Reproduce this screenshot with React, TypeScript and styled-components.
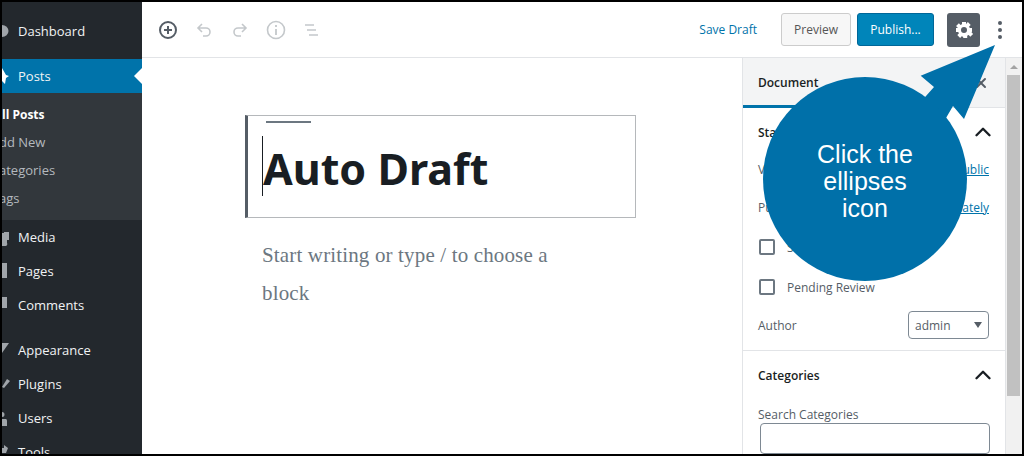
import React from "react";
import styled, { createGlobalStyle } from "styled-components";
import { ChevronUp, X } from "lucide-react";

const GlobalStyle = createGlobalStyle`
	html, body { margin: 0; padding: 0; background: #000; }
	body { font-family: "Open Sans", "Noto Sans", sans-serif; overflow: hidden; }
	* { box-sizing: border-box; }
`;

const Frame = styled.div`
	position: relative;
	width: 1024px;
	height: 456px;
	border: 2px solid #000;
	display: flex;
	overflow: hidden;
	background: #fff;
`;

const Sidebar = styled.nav`
	width: 140px;
	flex: none;
	background: #23282d;
	padding-top: 12px;
	color: #eee;
`;

const MenuItem = styled.div<{ $active?: boolean; $gap?: number }>`
	position: relative;
	height: 34px;
	margin-top: ${({ $gap }) => $gap || 0}px;
	padding-left: 16px;
	display: flex;
	align-items: center;
	font-size: 13px;
	color: #f1f3f4;
	background: ${({ $active }) => ($active ? "#0073aa" : "transparent")};
`;

const MenuIconSvg = styled.svg<{ $light?: boolean }>`
	position: absolute;
	left: 0;
	top: 8px;
	width: 8px;
	height: 18px;
	fill: ${({ $light }) => ($light ? "#fff" : "#a0a5aa")};
`;

const ActiveNotch = styled.span`
	position: absolute;
	right: 0;
	top: 9px;
	border: 8px solid transparent;
	border-left-width: 0;
	border-right-color: #fff;
`;

const SubMenu = styled.div`
	background: #32373c;
	height: 127px;
	padding: 7px 0 0;
`;

const SubItem = styled.div<{ $current?: boolean }>`
	height: 28px;
	margin-left: ${({ $current }) => ($current ? 0 : -3)}px;
	display: flex;
	align-items: center;
	font-size: ${({ $current }) => ($current ? 12 : 13)}px;
	font-weight: ${({ $current }) => ($current ? 700 : 400)};
	color: ${({ $current }) => ($current ? "#fff" : "#b4b9be")};
`;

const Main = styled.div`
	flex: 1;
	min-width: 0;
	display: flex;
	flex-direction: column;
`;

const TopBar = styled.header`
	height: 56px;
	flex: none;
	border-bottom: 1px solid #e2e4e7;
	display: flex;
	align-items: center;
	padding: 0 18px 0 14px;
`;

const ToolIcon = styled.svg`
	width: 24px;
	height: 24px;
	margin-right: 12px;
	fill: none;
	flex: none;
`;

const Spacer = styled.div`
	flex: 1;
`;

const SaveDraft = styled.span`
	font-size: 12px;
	color: #0073aa;
	margin-right: 24px;
`;

const PreviewButton = styled.button`
	width: 70px;
	height: 33px;
	border: 1px solid #ccc;
	border-radius: 3px;
	background: #f7f7f7;
	color: #555;
	font: 12px "Open Sans", sans-serif;
	padding: 0;
	margin-right: 6px;
`;

const PublishButton = styled.button`
	width: 77px;
	height: 33px;
	border: 1px solid #006799;
	border-radius: 3px;
	background: #0085ba;
	color: #fff;
	font: 12px "Open Sans", sans-serif;
	padding: 0;
	margin-right: 13px;
`;

const GearButton = styled.div`
	width: 33px;
	height: 34px;
	border-radius: 3px;
	background: #555d66;
	display: flex;
	align-items: center;
	justify-content: center;
	margin-right: 16px;
`;

const Dots = styled.svg`
	width: 8px;
	height: 20px;
	fill: #555d66;
`;

const Body = styled.div`
	flex: 1;
	min-height: 0;
	display: flex;
`;

const Editor = styled.main`
	flex: 1;
	padding: 57px 0 0 103px;
`;

const TitleBlock = styled.div`
	position: relative;
	width: 391px;
	height: 103px;
	border: 1px solid #b5b8bb;
	border-left: 3px solid #555d66;
	padding: 24px 0 0 15px;
`;

const BlockMark = styled.span`
	position: absolute;
	left: 18px;
	top: 5px;
	width: 45px;
	height: 2px;
	background: #6c7781;
`;

const Caret = styled.span`
	position: absolute;
	left: 14px;
	top: 20px;
	width: 1px;
	height: 60px;
	background: #191e23;
`;

const Title = styled.h1`
	margin: 0;
	font: 700 43px/58px "Noto Sans", "Open Sans", sans-serif;
	color: #191e23;
`;

const Paragraph = styled.p`
	margin: 18px 0 0 17px;
	width: 300px;
	font: 21px/38px "Liberation Serif", serif;
	letter-spacing: 0.15px;
	color: #6c7781;
`;

const Panel = styled.aside`
	width: 280px;
	flex: none;
	border-left: 1px solid #e2e4e7;
	display: flex;
`;

const PanelContent = styled.div`
	flex: 1;
	min-width: 0;
	border-right: 1px solid #e2e4e7;
`;

const TabBar = styled.div`
	height: 50px;
	background: #f3f4f5;
	border-bottom: 1px solid #e2e4e7;
	display: flex;
	align-items: center;
	justify-content: space-between;
	padding: 0 16px 0 15px;
	position: relative;
`;

const TabLabel = styled.span`
	font-size: 12px;
	font-weight: 600;
	color: #191e23;
`;

const TabUnderline = styled.span`
	position: absolute;
	left: 0;
	bottom: -1px;
	width: 91px;
	height: 3px;
	background: #0073aa;
`;

const Section = styled.section<{ $height: number }>`
	height: ${({ $height }) => $height}px;
	border-bottom: 1px solid #e2e4e7;
	padding: 0 16px 0 15px;
`;

const SectionHead = styled.div`
	height: 36px;
	margin: 6px -7px 0 0;
	display: flex;
	align-items: center;
	justify-content: space-between;
	font-size: 12px;
	font-weight: 600;
	color: #191e23;
`;

const Row = styled.div<{ $height?: number }>`
	height: ${({ $height }) => $height || 38}px;
	display: flex;
	align-items: center;
	justify-content: space-between;
	font-size: 12px;
	color: #555d66;
`;

const Link = styled.span`
	color: #0073aa;
	text-decoration: underline;
`;

const CheckRow = styled.div`
	height: 40px;
	display: flex;
	align-items: center;
	gap: 12px;
	font-size: 12px;
	color: #555d66;
`;

const CheckGroup = styled.div`
	padding-top: 1px;
`;

const CheckBox = styled.span`
	width: 16px;
	height: 16px;
	margin-left: 1px;
	border: 2px solid #6c7781;
	border-radius: 2px;
	flex: none;
`;

const SelectBox = styled.div`
	width: 81px;
	height: 28px;
	border: 1px solid #7e8993;
	border-radius: 4px;
	display: flex;
	align-items: center;
	justify-content: space-between;
	padding: 0 6px;
	font-size: 12px;
	color: #555d66;
`;

const SelectArrow = styled.span`
	border: 4px solid transparent;
	border-bottom-width: 0;
	border-top: 6px solid #555d66;
`;

const FieldLabel = styled.div`
	font-size: 12px;
	color: #555d66;
	margin-top: 13px;
	line-height: 17px;
`;

const TextField = styled.div`
	width: 230px;
	height: 31px;
	margin-left: 2px;
	border: 1px solid #7e8993;
	border-radius: 4px;
`;

const ScrollTrack = styled.div`
	width: 16px;
	flex: none;
	background: #f1f1f1;
	padding: 0 2px 0 1px;
	display: flex;
	flex-direction: column;
`;

const ScrollArrow = styled.div`
	height: 17px;
	display: flex;
	align-items: center;
	justify-content: center;
	&::before {
		content: "";
		border: 4px solid transparent;
		border-top-width: 0;
		border-bottom: 4px solid #a3a3a3;
	}
`;

const ScrollThumb = styled.div`
	height: 321px;
	background: #c1c1c1;
`;

const CalloutArrow = styled.svg`
	position: absolute;
	left: 0;
	top: 0;
	width: 1020px;
	height: 452px;
	pointer-events: none;
`;

const Callout = styled.div`
	position: absolute;
	left: 761px;
	top: 75px;
	width: 204px;
	height: 204px;
	border-radius: 50%;
	background: #0070a9;
	color: #fff;
	display: flex;
	align-items: center;
	justify-content: center;
	text-align: center;
	font: 25px/27px "Liberation Sans", Arial, sans-serif;
`;

const CalloutText = styled.div`
	width: 130px;
	margin-top: 5px;
`;

// the menu icons are cut off by the left edge of the shot, only their right part shows
const icons: Record<string, string> = {
	Dashboard: "M0 3a6.500 6 0 0 1 6.500 6A6.500 6 0 0 1 0 15z",
	Posts: "M0 1l4 7 3 1-3 2-1 6-3-3z",
	Media: "M0 5h2V4h5v8H5v3a2 2 0 0 1-2 3H0z",
	Pages: "M0 1h5v15H0z",
	Comments: "M0 1h5v11H0z",
	Appearance: "M0 2h7L0 12z",
	Plugins: "M0 12l5-8 3 2-6 7z",
	Users: "M0 3a2.500 2.500 0 0 1 0 5zM0 10h4a2 2 0 0 1 1 2v5H0z",
	Tools: "M0 5h2V2l4 3-2 5H0z",
};

function MenuIcon({ name, light }: { name: string; light?: boolean }) {
	return (
		<MenuIconSvg viewBox="0 0 8 18" $light={light}>
			<path d={icons[name]} />
		</MenuIconSvg>
	);
}

const subItems = ["ll Posts", "dd New", "ategories", "ags"];
const groupOne = ["Media", "Pages", "Comments"];
const groupTwo = ["Appearance", "Plugins", "Users", "Tools"];

export default function App() {
	return (
		<>
			<GlobalStyle />
			<Frame>
				<Sidebar>
					<MenuItem>
						<MenuIcon name="Dashboard" />
						Dashboard
					</MenuItem>
					<MenuItem $active $gap={11}>
						<MenuIcon name="Posts" light />
						Posts
						<ActiveNotch />
					</MenuItem>
					<SubMenu>
						{subItems.map((s, i) => (
							<SubItem key={s} $current={i === 0}>
								{s}
							</SubItem>
						))}
					</SubMenu>
					{groupOne.map((m) => (
						<MenuItem key={m}>
							<MenuIcon name={m} />
							{m}
						</MenuItem>
					))}
					{groupTwo.map((m, i) => (
						<MenuItem key={m} $gap={i === 0 ? 11 : 0}>
							<MenuIcon name={m} />
							{m}
						</MenuItem>
					))}
				</Sidebar>
				<Main>
					<TopBar>
						<ToolIcon viewBox="0 0 24 24">
							<circle cx="12" cy="12" r="8" stroke="#555d66" strokeWidth="2" />
							<path d="M12 8v8M8 12h8" stroke="#555d66" strokeWidth="2" />
						</ToolIcon>
						<ToolIcon viewBox="0 0 24 24">
							<path d="M10 6 6 10l4 4M6 10h8a4 4 0 0 1 0 8h-3" stroke="#c4c8cb" strokeWidth="1.6" />
						</ToolIcon>
						<ToolIcon viewBox="0 0 24 24">
							<path d="M14 6l4 4-4 4M18 10h-8a4 4 0 0 0 0 8h3" stroke="#c4c8cb" strokeWidth="1.6" />
						</ToolIcon>
						<ToolIcon viewBox="0 0 24 24">
							<circle cx="12" cy="12" r="8.5" stroke="#c4c8cb" strokeWidth="1.6" />
							<path d="M12 11v6M12 7v2" stroke="#c4c8cb" strokeWidth="1.8" />
						</ToolIcon>
						<ToolIcon viewBox="0 0 24 24">
							<path d="M5 7h9M7 12h9M9 17h9" stroke="#c4c8cb" strokeWidth="1.6" />
						</ToolIcon>
						<Spacer />
						<SaveDraft>Save Draft</SaveDraft>
						<PreviewButton>Preview</PreviewButton>
						<PublishButton>Publish...</PublishButton>
						<GearButton>
							<svg width="20" height="20" viewBox="0 0 20 20" fill="#fff">
								<path d="M18 12V8h-2.300a6 6 0 0 0-.6-1.500l1.600-1.600-2.800-2.800-1.600 1.600A6 6 0 0 0 12 4.300V2H8v2.300a6 6 0 0 0-1.500.6L4.900 3.300 2.100 6.100l1.600 1.600A6 6 0 0 0 4.300 8H2v4h2.300a6 6 0 0 0 .6 1.500l-1.600 1.600 2.800 2.800 1.600-1.600a6 6 0 0 0 1.500.6V18h4v-2.300a6 6 0 0 0 1.500-.6l1.600 1.600 2.800-2.800-1.600-1.600a6 6 0 0 0 .6-1.300H18zM10 13a3 3 0 1 1 0-6 3 3 0 0 1 0 6z" />
							</svg>
						</GearButton>
						<Dots viewBox="0 0 8 20">
							<circle cx="4" cy="3" r="2" />
							<circle cx="4" cy="10" r="2" />
							<circle cx="4" cy="17" r="2" />
						</Dots>
					</TopBar>
					<Body>
						<Editor>
							<TitleBlock>
								<BlockMark />
								<Caret />
								<Title>Auto Draft</Title>
							</TitleBlock>
							<Paragraph>Start writing or type / to choose a block</Paragraph>
						</Editor>
						<Panel>
							<PanelContent>
								<TabBar>
									<TabLabel>Document</TabLabel>
									<X size={16} strokeWidth={3} color="#555d66" />
									<TabUnderline />
								</TabBar>
								<Section $height={243 - 6}>
									<SectionHead>
										Status &amp; Visibility
										<ChevronUp size={26} strokeWidth={2.2} color="#191e23" />
									</SectionHead>
									<Row>
										Visibility
										<Link>Public</Link>
									</Row>
									<Row>
										Publish
										<Link>Immediately</Link>
									</Row>
									<CheckGroup>
										<CheckRow>
											<CheckBox />
											Stick to the top of the blog
										</CheckRow>
										<CheckRow>
											<CheckBox />
											Pending Review
										</CheckRow>
									</CheckGroup>
									<Row $height={36}>
										Author
										<SelectBox>
											admin
											<SelectArrow />
										</SelectBox>
									</Row>
								</Section>
								<Section $height={120}>
									<SectionHead>
										Categories
										<ChevronUp size={26} strokeWidth={2.2} color="#191e23" />
									</SectionHead>
									<FieldLabel>Search Categories</FieldLabel>
									<TextField />
								</Section>
							</PanelContent>
							<ScrollTrack>
								<ScrollArrow />
								<ScrollThumb />
							</ScrollTrack>
						</Panel>
					</Body>
				</Main>
				<CalloutArrow viewBox="0 0 1020 452">
					<path d="M993 43 918.700 73.700 932 85 900 121 930 140 951 104 962 117Z" fill="#0070a9" />
				</CalloutArrow>
				<Callout>
					<CalloutText>Click the ellipses icon</CalloutText>
				</Callout>
			</Frame>
		</>
	);
}
